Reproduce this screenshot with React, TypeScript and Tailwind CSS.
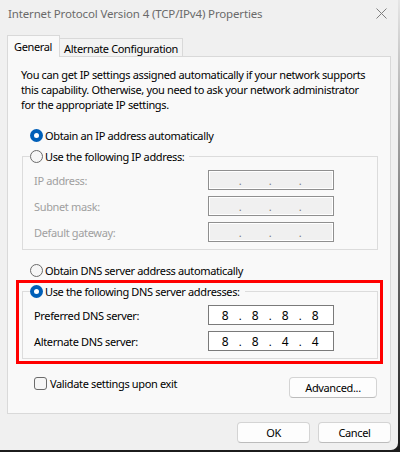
import React from "react";

const FONT = "font-['Noto_Sans','Open_Sans',sans-serif]";

function Radio({ checked }: { checked?: boolean }) {
  if (checked) {
    return (
      <span className="w-[13px] h-[13px] rounded-full bg-[#005fb8] flex items-center justify-center shrink-0">
        <span className="w-[5px] h-[5px] rounded-full bg-white" />
      </span>
    );
  }
  return <span className="w-[13px] h-[13px] rounded-full border border-[#6b6b6b] bg-[#f6f6f6] shrink-0" />;
}

function RadioRow({ label, checked }: { label: string; checked?: boolean }) {
  return (
    <div className="flex items-center gap-[2px] h-[15px]">
      <Radio checked={checked} />
      <span className="text-black whitespace-nowrap">{label}</span>
    </div>
  );
}

function IpBox({ values, disabled }: { values: string[]; disabled?: boolean }) {
  return (
    <div
      className={`w-[126px] h-[20px] border flex items-center pl-[2px] ${
        disabled ? "border-[#8f8f8f] bg-[#f0f0f0] shadow-[inset_0_0_0_1px_#ffffff]" : "border-[#7a7a7a] bg-white"
      }`}
    >
      {values.map((v, i) => (
        <React.Fragment key={i}>
          <span className="w-[28px] text-center text-black text-[12px]">{v}</span>
          {i < 3 && (
            <span className={`w-[2px] flex justify-center ${disabled ? "text-[#7a7a7a]" : "text-black"}`}>.</span>
          )}
        </React.Fragment>
      ))}
    </div>
  );
}

function FieldRow({ label, values, disabled }: { label: string; values: string[]; disabled?: boolean }) {
  return (
    <div className="flex items-center">
      <span className={`w-[185px] pl-[11px] ${disabled ? "text-[#a0a0a0]" : "text-black"}`}>{label}</span>
      <IpBox values={values} disabled={disabled} />
    </div>
  );
}

function Button({ children, className = "" }: { children: React.ReactNode; className?: string }) {
  return (
    <button
      className={`h-[21px] rounded-[4px] border border-[#d4d4d4] border-b-[#bcbcbc] bg-[#fdfdfd] text-black flex items-center justify-center ${className}`}
    >
      {children}
    </button>
  );
}

const EMPTY = ["", "", "", ""];

export default function App() {
  return (
    <div
      className={`w-[400px] h-[452px] bg-gradient-to-b from-[#e6e6e6] to-[#1c1c1c] ${FONT} text-[11px] leading-[15px] tracking-[-0.35px]`}
    >
      <div className="w-[398px] h-[450px] bg-[#f0f0f0] rounded-br-[7px] flex flex-col">
        {/* title bar */}
        <div className="h-[26px] flex items-center justify-between pl-[8px] pr-[11px]">
          <span className="text-[#6a6a6a] text-[11.5px] tracking-[-0.15px]">
            Internet Protocol Version 4 (TCP/IPv4) Properties
          </span>
          <svg width="11" height="11" viewBox="0 0 11 11" className="mt-[1px]">
            <path d="M0.5 0.5 L10.5 10.5 M10.5 0.5 L0.5 10.5" stroke="#7f7f7f" strokeWidth="1" />
          </svg>
        </div>

        {/* tabs */}
        <div className="flex items-end px-[7px] pt-[9px] h-[30px]">
          <div className="relative z-10 h-[22px] -mb-[1px] pl-[6px] pr-[7px] pt-[3px] border border-b-0 border-[#d9d9d9] bg-[#f9f9f9] text-black">
            General
          </div>
          <div className="h-[18px] pl-[4px] pr-[4px] pt-[2px] border-t border-r border-[#d9d9d9] bg-[#f3f3f3] text-black whitespace-nowrap">
            Alternate Configuration
          </div>
        </div>

        {/* panel */}
        <div className="mx-[7px] h-[358px] border border-[#d9d9d9] bg-[#f9f9f9] flex flex-col">
          <p className="pt-[10px] pl-[13px] text-black whitespace-nowrap">
            You can get IP settings assigned automatically if your network supports
            <br />
            this capability. Otherwise, you need to ask your network administrator
            <br />
            for the appropriate IP settings.
          </p>

          <div className="mt-[16px] pl-[22px]">
            <RadioRow label="Obtain an IP address automatically" checked />
          </div>

          <fieldset className="mt-[6px] ml-[14px] w-[356px] border border-[#dcdcdc] px-0 pb-[7px] m-0">
            <legend className="ml-[7px] pr-[5px]">
              <RadioRow label="Use the following IP address:" />
            </legend>
            <div className="mt-[6px] flex flex-col gap-[6px]">
              <FieldRow label="IP address:" values={EMPTY} disabled />
              <FieldRow label="Subnet mask:" values={EMPTY} disabled />
              <FieldRow label="Default gateway:" values={EMPTY} disabled />
            </div>
          </fieldset>

          <div className="mt-[13px] pl-[22px]">
            <RadioRow label="Obtain DNS server address automatically" />
          </div>

          <div className="mt-[2px] ml-[8px] w-[367px] border-[3px] border-[#ff0000] pt-[1px] pb-[2px] pl-[3px]">
            <fieldset className="w-[356px] border border-[#dcdcdc] px-0 pb-[7px] m-0">
              <legend className="ml-[7px] pr-[5px]">
                <RadioRow label="Use the following DNS server addresses:" checked />
              </legend>
              <div className="mt-[6px] flex flex-col gap-[6px]">
                <FieldRow label="Preferred DNS server:" values={["8", "8", "8", "8"]} />
                <FieldRow label="Alternate DNS server:" values={["8", "8", "4", "4"]} />
              </div>
            </fieldset>
          </div>

          <div className="mt-[12px] flex items-start">
            <label className="ml-[26px] flex items-center gap-[3px] h-[13px] mt-[1px]">
              <span className="w-[13px] h-[13px] rounded-[3px] border border-[#6b6b6b] bg-[#f6f6f6]" />
              <span className="text-black">Validate settings upon exit</span>
            </label>
            <Button className="ml-auto mr-[13px] mt-[1px] w-[88px]">Advanced...</Button>
          </div>
        </div>

        {/* dialog buttons */}
        <div className="mt-[8px] flex justify-end gap-[8px] pr-[7px]">
          <Button className="w-[73px]">OK</Button>
          <Button className="w-[73px]">Cancel</Button>
        </div>
      </div>
    </div>
  );
}
